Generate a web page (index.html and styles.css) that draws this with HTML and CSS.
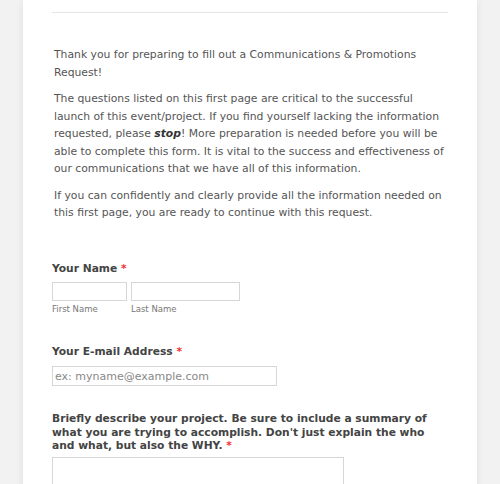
FILE: index.html
```html
<!DOCTYPE html>
<html lang="en">
<head>
  <meta charset="UTF-8" />
  <title>Communications &amp; Promotions Request</title>
  <link rel="stylesheet" href="styles.css">
</head>
<body>
  <div class="form-card">
    <hr class="top-line">

    <div class="intro">
      <p>Thank you for preparing to fill out a Communications &amp; Promotions Request!</p>
      <p>The questions listed on this first page are critical to the successful launch of this event/project. If you find yourself lacking the information requested, please <b><i>stop</i></b>! More preparation is needed before you will be able to complete this form. It is vital to the success and effectiveness of our communications that we have all of this information.</p>
      <p>If you can confidently and clearly provide all the information needed on this first page, you are ready to continue with this request.</p>
    </div>

    <div class="field name-field">
      <label class="field-label">Your Name <span class="req">*</span></label>
      <div class="name-row">
        <div class="sub">
          <input type="text" class="first">
          <span class="sublabel">First Name</span>
        </div>
        <div class="sub">
          <input type="text" class="last">
          <span class="sublabel">Last Name</span>
        </div>
      </div>
    </div>

    <div class="field email-field">
      <label class="field-label">Your E-mail Address <span class="req">*</span></label>
      <input type="text" class="email" placeholder="ex: myname@example.com">
    </div>

    <div class="field describe-field">
      <label class="field-label long">Briefly describe your project. Be sure to include a summary of what you are trying to accomplish. Don't just explain the who and what, but also the WHY. <span class="req">*</span></label>
      <textarea class="describe"></textarea>
    </div>
  </div>
</body>
</html>
```

FILE: styles.css
```css
html, body {
  height: 100%;
}
body {
  margin: 0;
  background: #f2f2f2;
  font-family: "DejaVu Sans", Verdana, sans-serif;
  color: #555;
  overflow: hidden;
}
.form-card {
  width: 454px;
  margin: 0 auto;
  min-height: 100%;
  background: #fff;
  box-shadow: 0 0 8px rgba(0,0,0,0.08);
  padding: 12px 29px 0 29px;
  box-sizing: border-box;
}
.top-line {
  border: none;
  border-top: 1px solid #e6e6e6;
  margin: 0;
}
.intro {
  padding: 33px 0 0 2px;
  font-size: 10.8px;
  line-height: 17.5px;
  color: #555;
}
.intro p {
  margin: 0 0 9px 0;
}
.intro b {
  color: #333;
}
.name-field {
  margin-top: 40px;
}
.email-field {
  margin-top: 31px;
}
.describe-field {
  margin-top: 26px;
}
.field-label {
  display: block;
  font-weight: bold;
  font-size: 10.7px;
  color: #444;
  margin-bottom: 7px;
}
.field-label.long {
  line-height: 13.5px;
  margin-bottom: 4px;
}
.req {
  color: #e33;
}
.name-row {
  display: flex;
  gap: 4px;
}
.sub {
  display: flex;
  flex-direction: column;
}
input, textarea {
  border: 1px solid #d6d6d6;
  box-sizing: border-box;
  margin: 0;
  font-family: "DejaVu Sans", Verdana, sans-serif;
  background: #fff;
}
.first {
  width: 75px;
  height: 19px;
}
.last {
  width: 109px;
  height: 19px;
}
.sublabel {
  font-size: 8.5px;
  color: #777;
  margin-top: 3px;
}
.email {
  width: 225px;
  height: 20px;
  font-size: 11px;
  padding: 0 2px;
}
.email::placeholder {
  color: #888;
}
.describe {
  display: block;
  width: 292px;
  height: 60px;
  resize: none;
}
```
